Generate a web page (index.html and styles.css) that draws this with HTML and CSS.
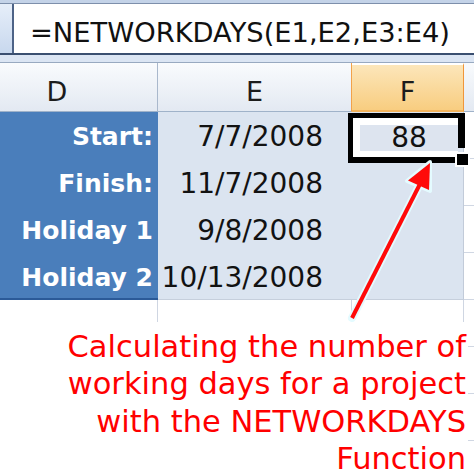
FILE: index.html
```html
<!DOCTYPE html>
<html>
<head>
<meta charset="utf-8">
<link rel="stylesheet" href="styles.css">
</head>
<body>
<div class="page">
  <div class="top-strip"></div>
  <div class="formula-bar">
    <div class="name-stub"></div>
    <div class="formula">=NETWORKDAYS(E1,E2,E3:E4)</div>
  </div>
  <div class="band"></div>
  <div class="sheet">
    <div class="hdr hdr-d">D</div>
    <div class="hdr hdr-e">E</div>
    <div class="hdr hdr-f">F</div>
    <div class="hdr hdr-g"></div>

    <div class="cell lbl">Start:</div>
    <div class="cell date">7/7/2008</div>
    <div class="cell fcell"></div>
    <div class="cell gcell"></div>

    <div class="cell lbl">Finish:</div>
    <div class="cell date">11/7/2008</div>
    <div class="cell fcell"></div>
    <div class="cell gcell"></div>

    <div class="cell lbl">Holiday 1</div>
    <div class="cell date">9/8/2008</div>
    <div class="cell fcell"></div>
    <div class="cell gcell"></div>

    <div class="cell lbl last">Holiday 2</div>
    <div class="cell date last">10/13/2008</div>
    <div class="cell fcell last"></div>
    <div class="cell gcell"></div>

    <div class="cell wcell"></div><div class="cell wcell"></div><div class="cell wcell"></div><div class="cell gcell"></div>
    <div class="cell wcell"></div><div class="cell wcell"></div><div class="cell wcell"></div><div class="cell gcell"></div>
    <div class="cell wcell"></div><div class="cell wcell"></div><div class="cell wcell"></div><div class="cell gcell"></div>
    <div class="cell wcell"></div><div class="cell wcell"></div><div class="cell wcell"></div><div class="cell gcell"></div>
  </div>

  <div class="selection">
    <div class="sel-box"><div class="sel-inner">88</div></div>
    <div class="sel-right"></div>
    <div class="sel-handle"></div>
  </div>

  <svg class="arrow" width="474" height="474" viewBox="0 0 474 474">
    <line x1="352" y1="318" x2="421" y2="182" stroke="#e4fbff" stroke-width="8" stroke-linecap="round"/>
    <polygon points="430,162 407,181 430,191" fill="#e4fbff" stroke="#e4fbff" stroke-width="4" stroke-linejoin="round"/>
    <line x1="352" y1="318" x2="421" y2="182" stroke="#ff0a0a" stroke-width="4"/>
    <polygon points="430,163 408,180.5 429,190" fill="#ff0a0a"/>
  </svg>

  <div class="caption">Calculating the number of<br>working days for a project<br>with the NETWORKDAYS<br>Function</div>
</div>
</body>
</html>
```

FILE: styles.css
```css
html, body {
  margin: 0;
  padding: 0;
  background: #ffffff;
}
.page {
  position: relative;
  width: 474px;
  height: 474px;
  overflow: hidden;
  font-family: "DejaVu Sans", "Liberation Sans", sans-serif;
  color: #111111;
}
.top-strip {
  height: 3px;
  background: #c4d3e8;
}
.formula-bar {
  display: flex;
  height: 49px;
  border-top: 1px solid #7d8fab;
  border-bottom: 2px solid #3a4f70;
  background: #ffffff;
}
.name-stub {
  width: 12px;
  background: linear-gradient(#e6eef9, #c8d8ee);
  border-right: 2px solid #4d6387;
}
.formula {
  flex: 1;
  padding: 8px 0 0 16px;
  font-size: 27.3px;
  line-height: 41px;
  white-space: nowrap;
  color: #111111;
}
.band {
  height: 7px;
  background: #dbe5f3;
  border-bottom: 1px solid #98a9c0;
}
.sheet {
  display: grid;
  margin-left: -43px;
  grid-template-columns: 201px 194px 112px 40px;
  grid-template-rows: 49px 47px 47px 47px 47px 47px 47px 47px 47px;
}
.hdr {
  box-sizing: border-box;
  text-align: center;
  font-size: 27px;
  line-height: 40px;
  padding-top: 9px;
  color: #1c1c1c;
  background: linear-gradient(#f9fbfd, #e3e9f2);
  border-right: 1px solid #a9b8cc;
  border-bottom: 1px solid #9fb2c9;
}
.hdr-e {
  border-right: 1px solid #f2a24a;
}
.hdr-f {
  background: linear-gradient(#fce6ba, #f8cd80);
  border-top: 2px solid #ffffff;
  border-right: 1px solid #f0963a;
  border-bottom: 2px solid #f3b45c;
  padding-top: 7px;
}
.hdr-g {
  border-right: none;
}
.cell {
  box-sizing: border-box;
  white-space: nowrap;
}
.lbl {
  background: #4a7ebb;
  color: #ffffff;
  font-weight: bold;
  font-size: 25px;
  line-height: 44px;
  padding-top: 3px;
  text-align: right;
  padding-right: 5px;
}
.date {
  background: #dbe4f0;
  font-size: 28px;
  line-height: 44px;
  padding-top: 3px;
  text-align: right;
  padding-right: 29px;
  color: #121212;
}
.fcell {
  background: #dbe4f0;
  border-right: 1px solid #c2cbd9;
}
.lbl.last {
  border-bottom: 2px solid #2b5a98;
}
.date.last, .fcell.last {
  border-bottom: 1px solid #c6cfdc;
}
.gcell {
  background: #ffffff;
  border-bottom: 1px solid #d0d7e3;
}
.wcell {
  background: #ffffff;
  border-right: 1px solid #cfd6e2;
  border-bottom: 1px solid #dde3ec;
}
.selection {
  position: absolute;
  left: 348px;
  top: 113px;
  width: 122px;
  height: 54px;
}
.sel-box {
  box-sizing: border-box;
  width: 110px;
  height: 50px;
  border-left: 5px solid #000000;
  border-top: 5px solid #000000;
  border-bottom: 6px solid #000000;
  background: #ffffff;
  padding: 7px 0 6px 7px;
}
.sel-inner {
  height: 100%;
  background: #dde4ef;
  text-align: center;
  font-size: 28px;
  line-height: 26px;
  color: #111111;
}
.sel-right {
  position: absolute;
  left: 110px;
  top: 0;
  width: 7px;
  height: 35px;
  background: #000000;
}
.sel-handle {
  position: absolute;
  left: 109px;
  top: 41px;
  width: 11px;
  height: 11px;
  background: #000000;
  box-shadow: 0 0 0 2px #ffffff;
}
.arrow {
  position: absolute;
  left: 0;
  top: 0;
}
.caption {
  position: absolute;
  left: 0;
  top: 322px;
  width: 468px;
  bottom: 0;
  box-sizing: border-box;
  background: #ffffff;
  padding: 6px 2px 0 0;
  text-align: right;
  color: #ff0000;
  font-size: 30.5px;
  line-height: 37.4px;
  white-space: nowrap;
}
```
